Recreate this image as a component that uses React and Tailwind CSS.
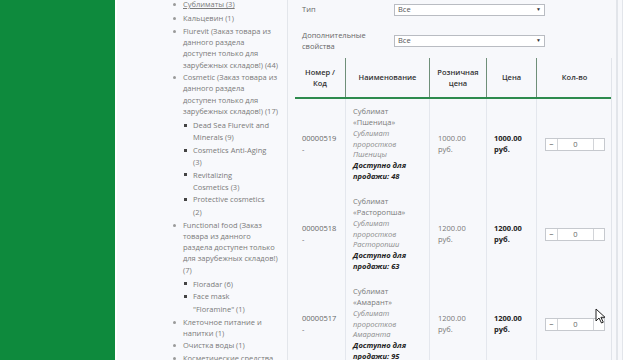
import React from 'react';

const categories = [
  { lines: ['Сублиматы (3)'], link: true },
  { lines: ['Кальцевин (1)'] },
  { lines: ['Flurevit (Заказ товара из', 'данного раздела', 'доступен только для', 'зарубежных складов!) (44)'] },
  {
    lines: ['Cosmetic (Заказ товара из', 'данного раздела', 'доступен только для', 'зарубежных складов!) (17)'],
    children: [
      ['Dead Sea Flurevit and', 'Minerals (9)'],
      ['Cosmetics Anti-Aging', '(3)'],
      ['Revitalizing', 'Cosmetics (3)'],
      ['Protective cosmetics', '(2)'],
    ],
  },
  {
    lines: ['Functional food (Заказ', 'товара из данного', 'раздела доступен только', 'для зарубежных складов!)', '(7)'],
    children: [['Floradar (6)'], ['Face mask', '"Floramine" (1)']],
  },
  { lines: ['Клеточное питание и', 'напитки (1)'] },
  { lines: ['Очистка воды (1)'] },
  { lines: ['Косметические средства'] },
];

const products = [
  { code: '00000519', name: ['Сублимат', '«Пшеница»'], desc: ['Сублимат', 'проростков', 'Пшеницы'], stock: 48, price: '1000.00' },
  { code: '00000518', name: ['Сублимат', '«Расторопша»'], desc: ['Сублимат', 'проростков', 'Расторопши'], stock: 63, price: '1200.00' },
  { code: '00000517', name: ['Сублимат', '«Амарант»'], desc: ['Сублимат', 'проростков', 'Амаранта'], stock: 95, price: '1200.00' },
];

const Lines = ({ lines }) => lines.map((l, i) => <div key={i}>{l}</div>);

const Sidebar = () => (
  <div className="w-[171px] shrink-0 border-r border-[#e3e6eb] bg-[#f8f9fc] pl-[56px] pt-0 overflow-hidden">
    <ul className="-mt-[1px] text-[#7a7a7a]">
      {categories.map((c, i) => (
        <li key={i} className={i === 0 ? 'mb-[3px]' : 'mb-[1.5px]'}>
          <div className="flex whitespace-nowrap leading-[11.2px]">
            <span className="w-[10px] shrink-0 pt-[4px]">
              <span className="block w-[3px] h-[3px] rounded-full bg-[#9a9a9a]" />
            </span>
            <div className={c.link ? 'underline' : ''}>
              <Lines lines={c.lines} />
            </div>
          </div>
          {c.children && (
            <ul className="pl-[11px] mt-[2px] mb-[1px]">
              {c.children.map((s, j) => (
                <li key={j} className="flex whitespace-nowrap leading-[12.4px]">
                  <span className="w-[9px] shrink-0 pt-[4.7px]">
                    <span className="block w-[3px] h-[3px] bg-[#444]" />
                  </span>
                  <div>
                    <Lines lines={s} />
                  </div>
                </li>
              ))}
            </ul>
          )}
        </li>
      ))}
    </ul>
  </div>
);

const Select = () => (
  <div className="w-[151px] h-[12px] bg-white border border-[#b9bcc2] flex items-center justify-between px-[3px] text-[#555]">
    <span>Все</span>
    <span className="text-[5px] text-[#333]">▼</span>
  </div>
);

const cols = 'grid grid-cols-[50px_84px_57px_50px_76px]';

const QtyBox = () => (
  <div className="w-[60px] h-[13px] bg-white border border-[#c6c9ce] flex text-[#666]">
    <div className="w-[12px] border-r border-[#d2d4d8] flex items-center justify-center text-[#333]">−</div>
    <div className="flex-1 flex items-center justify-center">0</div>
    <div className="w-[11px] border-l border-[#d2d4d8]" />
  </div>
);

const Table = () => (
  <div className="w-[317px] border-r border-[#e1e4ea]">
    <div className={`${cols} h-[41px] border-b-2 border-[#2e8b4e] font-semibold text-[#333] text-center leading-[11px]`}>
      <div className="flex items-center justify-center">Номер /<br />Код</div>
      <div className="flex items-center justify-center border-l border-[#6f8f79]">Наименование</div>
      <div className="flex items-center justify-center border-l border-[#6f8f79]">Розничная<br />цена</div>
      <div className="flex items-center justify-center border-l border-[#6f8f79]">Цена</div>
      <div className="flex items-center justify-center border-l border-[#6f8f79]">Кол-во</div>
    </div>
    {products.map((p) => (
      <div key={p.code} className={`${cols} h-[90px] leading-[10.8px]`}>
        <div className="flex items-center pl-[7px] text-[#666]">
          <div>{p.code}<br />-</div>
        </div>
        <div className="flex items-center pl-[7px] border-l border-[#e4e7ed] whitespace-nowrap">
          <div>
            <div className="text-[#7a7a7a]"><Lines lines={p.name} /></div>
            <div className="italic text-[#8c8c8c]"><Lines lines={p.desc} /></div>
            <div className="italic font-bold text-[#222]">Доступно для<br />продажи: {p.stock}</div>
          </div>
        </div>
        <div className="flex items-center pl-[8px] border-l border-[#e4e7ed] text-[#777]">
          <div>{p.price}<br />руб.</div>
        </div>
        <div className="flex items-center pl-[7px] border-l border-[#e4e7ed] font-bold text-[#222]">
          <div>{p.price}<br />руб.</div>
        </div>
        <div className="flex items-center pl-[8px] border-l border-[#e4e7ed]">
          <QtyBox />
        </div>
      </div>
    ))}
  </div>
);

const Cursor = () => (
  <svg className="absolute left-[595px] top-[308px]" width="11" height="16" viewBox="0 0 11 16">
    <path d="M1 1 L1 13 L4 10 L6.5 15 L8.3 14.2 L5.9 9.3 L10 9.3 Z" fill="#fff" stroke="#222" strokeWidth="1" strokeLinejoin="round" />
  </svg>
);

export default function App() {
  return (
    <div className="relative w-[640px] h-[360px] overflow-hidden flex bg-white font-['Open_Sans','Liberation_Sans',sans-serif] text-[7.5px]">
      <div className="w-[115px] shrink-0 bg-[#0e8a3d]" />
      <div className="w-[2px] shrink-0 bg-white" />
      <Sidebar />
      <div className="flex flex-1 bg-[#f7f8fb]">
        <div className="pl-[7px] shrink-0">
          <div className="pl-[7px] pt-[4px] h-[58px] text-[#666]">
            <div className="flex items-center h-[12px]">
              <div className="w-[92px]">Тип</div>
              <Select />
            </div>
            <div className="flex items-center h-[24px] mt-[13px]">
              <div className="w-[92px] leading-[11px]">Дополнительные<br />свойства</div>
              <Select />
            </div>
          </div>
          <Table />
        </div>
        <div className="w-[4px] shrink-0" />
        <div className="w-[1.5px] shrink-0 bg-[#e2e5ea]" />
        <div className="w-[4px] shrink-0" />
        <div className="w-[1.5px] shrink-0 bg-[#e2e5ea]" />
        <div className="flex-1 bg-white" />
      </div>
      <Cursor />
    </div>
  );
}
